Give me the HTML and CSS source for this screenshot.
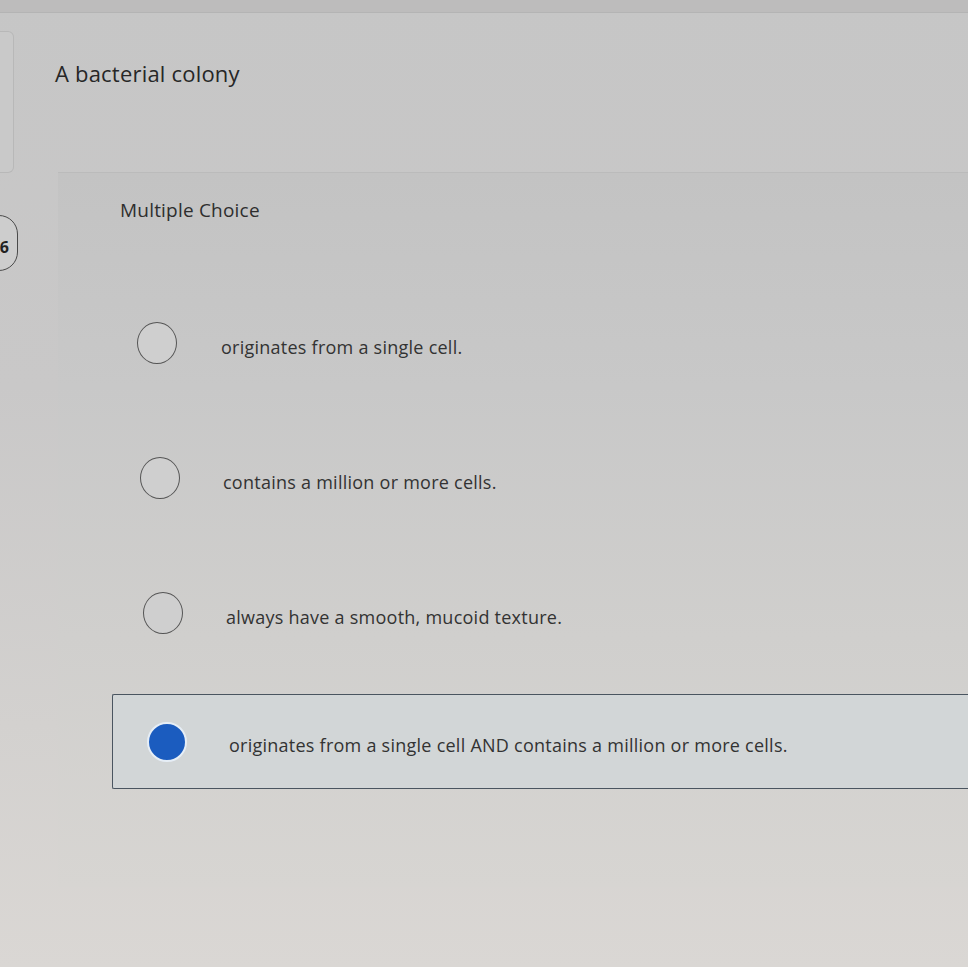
FILE: index.html
```html
<!DOCTYPE html>
<html>
<head>
<meta charset="utf-8">
<link rel="stylesheet" href="styles.css">
</head>
<body>
<div class="topbar"></div>
<div class="question">
  <div class="qcard"></div>
  <h1 class="title">A bacterial colony</h1>
</div>
<div class="panel">
  <div class="badge">6</div>
  <div class="kind">Multiple Choice</div>
  <ul class="options">
    <li class="opt o1"><span class="radio"></span><span class="label">originates from a single cell.</span></li>
    <li class="opt o2"><span class="radio"></span><span class="label">contains a million or more cells.</span></li>
    <li class="opt o3"><span class="radio"></span><span class="label">always have a smooth, mucoid texture.</span></li>
    <li class="opt selected"><span class="radio"></span><span class="label">originates from a single cell AND contains a million or more cells.</span></li>
  </ul>
</div>
</body>
</html>
```
FILE: styles.css
```css
html, body {
  margin: 0;
  padding: 0;
}
body {
  width: 968px;
  height: 967px;
  overflow: hidden;
  font-family: "Open Sans", "Liberation Sans", sans-serif;
  color: #2b2b2b;
  background: linear-gradient(180deg, #c6c6c6 0%, #c9c8c8 40%, #d3d1cf 75%, #dad7d4 100%);
}
.topbar {
  height: 12px;
  background: #bdbcbc;
  border-bottom: 1px solid #b4b4b4;
}
.question {
  display: flex;
  align-items: flex-start;
  height: 159px;
}
.qcard {
  width: 13px;
  height: 140px;
  margin-top: 18px;
  border: 1px solid #b8b8b8;
  border-left: none;
  border-radius: 0 6px 6px 0;
  background: #c9c9c9;
}
.title {
  margin: 45px 0 0 41px;
  font-size: 22px;
  font-weight: 400;
  letter-spacing: 0.2px;
  color: #262626;
}
.panel {
  position: relative;
  margin-left: 58px;
  height: 690px;
  padding-top: 24px;
  background: linear-gradient(180deg, #c3c3c3 0%, #c8c8c8 30%, #d0cfcd 65%, #d7d5d2 100%);
  border-top: 1px solid #bbbbbb;
}
.badge {
  position: absolute;
  left: -78px;
  top: 42px;
  width: 38px;
  height: 56px;
  border: 1.5px solid #4a4a4a;
  border-radius: 20px;
  background: #cdcdcd;
  box-sizing: border-box;
  display: flex;
  align-items: center;
  justify-content: flex-end;
  padding-right: 8px;
  padding-top: 8px;
  font-size: 16px;
  font-weight: 700;
  color: #222;
}
.kind {
  margin-left: 62px;
  font-size: 19px;
  letter-spacing: 0.2px;
  color: #2e2e2e;
}
.options {
  list-style: none;
  margin: 96px 0 0 0;
  padding: 0;
  display: flex;
  flex-direction: column;
}
.opt {
  display: flex;
  align-items: center;
  height: 48px;
  font-size: 18px;
  letter-spacing: 0.25px;
  color: #333;
}
.opt + .opt {
  margin-top: 87px;
}
.label {
  padding-top: 7px;
}
.radio {
  width: 40px;
  height: 42px;
  box-sizing: border-box;
  border: 1.5px solid #555;
  border-radius: 50%;
  background: #cfcfcf;
  flex: none;
}
.o1 { padding-left: 79px; }
.o1 .label { margin-left: 44px; }
.o2 { padding-left: 82px; }
.o2 .label { margin-left: 43px; }
.o3 { padding-left: 85px; }
.o3 .label { margin-left: 43px; }
.opt.selected {
  margin-top: 57px;
  margin-left: 54px;
  height: 95px;
  padding-left: 34px;
  box-sizing: border-box;
  border: 1.5px solid #4a5560;
  border-right: none;
  border-radius: 2px 0 0 2px;
  background: #d2d6d7;
}
.selected .radio {
  width: 40px;
  height: 40px;
  background: #1b5cbf;
  border: 2px solid #e6eef6;
}
.selected .label {
  margin-left: 42px;
}
```
